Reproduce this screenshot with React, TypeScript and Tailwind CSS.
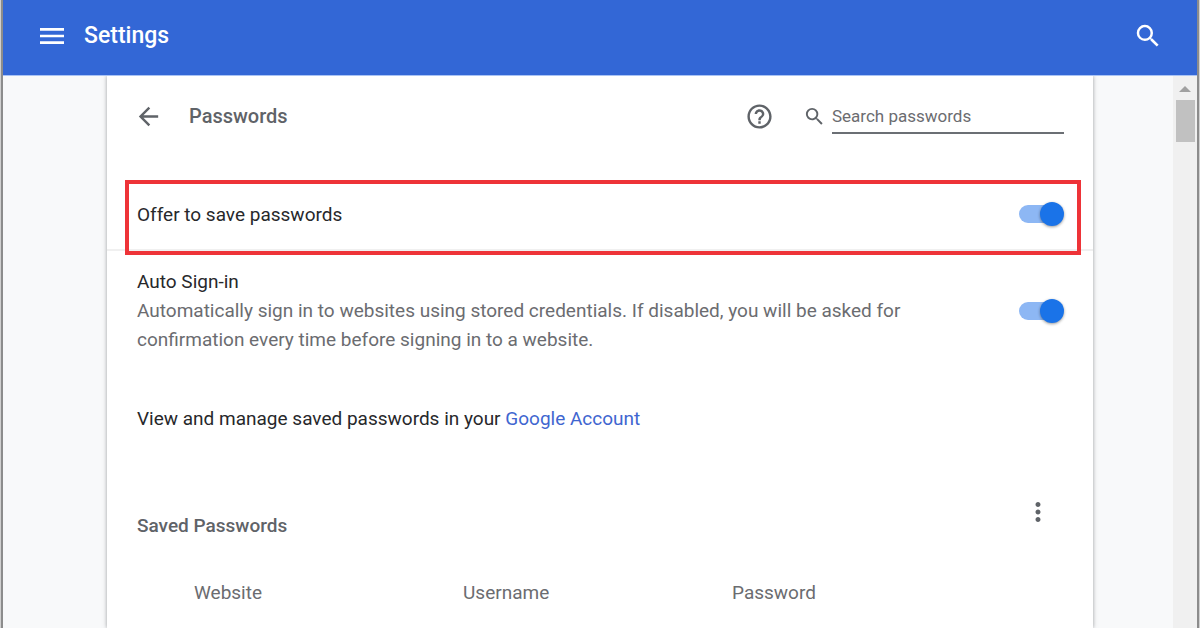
import { useState } from "react";
import type { ReactNode } from "react";
import {
  MdArrowBack,
  MdHelpOutline,
  MdMenu,
  MdMoreVert,
  MdSearch,
} from "react-icons/md";

const columns = ["Website", "Username", "Password"];

interface ToggleRowProps {
  id: string;
  title: string;
  description?: string;
  className: string;
  children?: ReactNode;
}

function ToggleRow({
  id,
  title,
  description,
  className,
  children,
}: ToggleRowProps) {
  const [checked, setChecked] = useState(true);

  return (
    <div
      className={`relative flex items-center justify-between pr-[29px] pl-[30px] ${className}`}
    >
      <label htmlFor={id} className="max-w-[780px]">
        <span className="block">{title}</span>
        {description ? (
          <span className="block text-[#6b6c70]">{description}</span>
        ) : null}
      </label>
      <span className="relative flex h-6 w-[45px] shrink-0 items-center">
        <input
          id={id}
          type="checkbox"
          role="switch"
          checked={checked}
          onChange={() => setChecked(!checked)}
          className="peer h-[18px] w-10 cursor-pointer appearance-none rounded-full bg-gray-400 checked:bg-[#8db7f4]"
        />
        <span className="pointer-events-none absolute left-0 size-6 rounded-full bg-white shadow-[0_1px_3px_rgba(0,0,0,0.4)] peer-checked:right-0 peer-checked:left-auto peer-checked:bg-[#1a73e8]" />
      </span>
      {children}
    </div>
  );
}

function Scrollbar() {
  return (
    <div className="absolute inset-y-0 right-0 flex w-6 flex-col items-center bg-[#f0f0f0] pt-[10px]">
      <svg width="12" height="6" viewBox="0 0 12 6" fill="#a0a0a0">
        <path d="M6 0l6 6H0z" />
      </svg>
      <div className="mt-2 h-[42px] w-[19px] bg-[#c1c1c1]" />
    </div>
  );
}

export default function App() {
  const [query, setQuery] = useState("");

  return (
    <div className="h-screen bg-[#d0d0d0] px-px">
      <div className="flex h-full flex-col overflow-hidden border-x-2 border-[#8c8c8c] bg-[#f8f9fa] font-[Roboto,sans-serif] text-[19px] leading-[29px] text-[#27282b]">
        <header className="relative z-10 flex h-[76px] shrink-0 items-center border-b border-[#a9c3f5] bg-[#3367d6] pr-[34px] pb-1 pl-[33px] text-white">
          <button type="button" aria-label="Main menu">
            <MdMenu className="size-8" />
          </button>
          <h1 className="ml-4 text-[23px] font-medium">Settings</h1>
          <button type="button" aria-label="Search settings" className="ml-auto">
            <MdSearch className="size-[30px]" />
          </button>
        </header>

        <div className="relative flex min-h-0 grow justify-center">
          <main className="w-full max-w-[986px] bg-white shadow-[0_0_4px_rgba(60,64,67,0.5)]">
            <div className="flex h-[81px] items-center pr-[29px] pl-[27px] text-[#5f6368]">
              <button type="button" aria-label="Back">
                <MdArrowBack className="size-[29px]" />
              </button>
              <h2 className="ml-[26px] text-[20px] font-medium">Passwords</h2>
              <a href="#help" aria-label="Help" className="ml-auto">
                <MdHelpOutline className="size-[29px]" />
              </a>
              <label
                htmlFor="search"
                aria-label="Search passwords"
                className="ml-[29px]"
              >
                <MdSearch className="size-[23px]" />
              </label>
              <input
                id="search"
                type="text"
                placeholder="Search passwords"
                value={query}
                onChange={(e) => setQuery(e.target.value)}
                className="ml-1.5 h-[34px] w-[232px] border-b-2 border-[#6b6f74] text-[17px] outline-none placeholder:text-[#6b6c70]"
              />
            </div>

            <ToggleRow
              id="offer"
              title="Offer to save passwords"
              className="mt-[22px] h-[72px] border-b-2 border-[#f0f0f0]"
            >
              <div className="pointer-events-none absolute top-px right-3 -bottom-[6px] left-[18px] border-4 border-[#ee3338]" />
            </ToggleRow>

            <ToggleRow
              id="auto"
              title="Auto Sign-in"
              description="Automatically sign in to websites using stored credentials. If disabled, you will be asked for confirmation every time before signing in to a website."
              className="py-4"
            />

            <p className="mt-[34px] px-[30px]">
              View and manage saved passwords in your{" "}
              <a href="#account" className="text-[#3f66d0]">
                Google Account
              </a>
            </p>

            <div className="mt-16 flex justify-between pr-10 pl-[30px] text-[#5f6368]">
              <h2 className="mt-[14px] font-medium">Saved Passwords</h2>
              <button
                type="button"
                aria-label="More actions"
                className="self-start"
              >
                <MdMoreVert className="size-[30px]" />
              </button>
            </div>

            <table className="mt-[38px] ml-[87px] w-[807px] table-fixed text-left text-[#6b6c70]">
              <thead>
                <tr>
                  {columns.map((column) => (
                    <th key={column} scope="col" className="font-normal">
                      {column}
                    </th>
                  ))}
                </tr>
              </thead>
            </table>
          </main>
          <Scrollbar />
        </div>
      </div>
    </div>
  );
}
